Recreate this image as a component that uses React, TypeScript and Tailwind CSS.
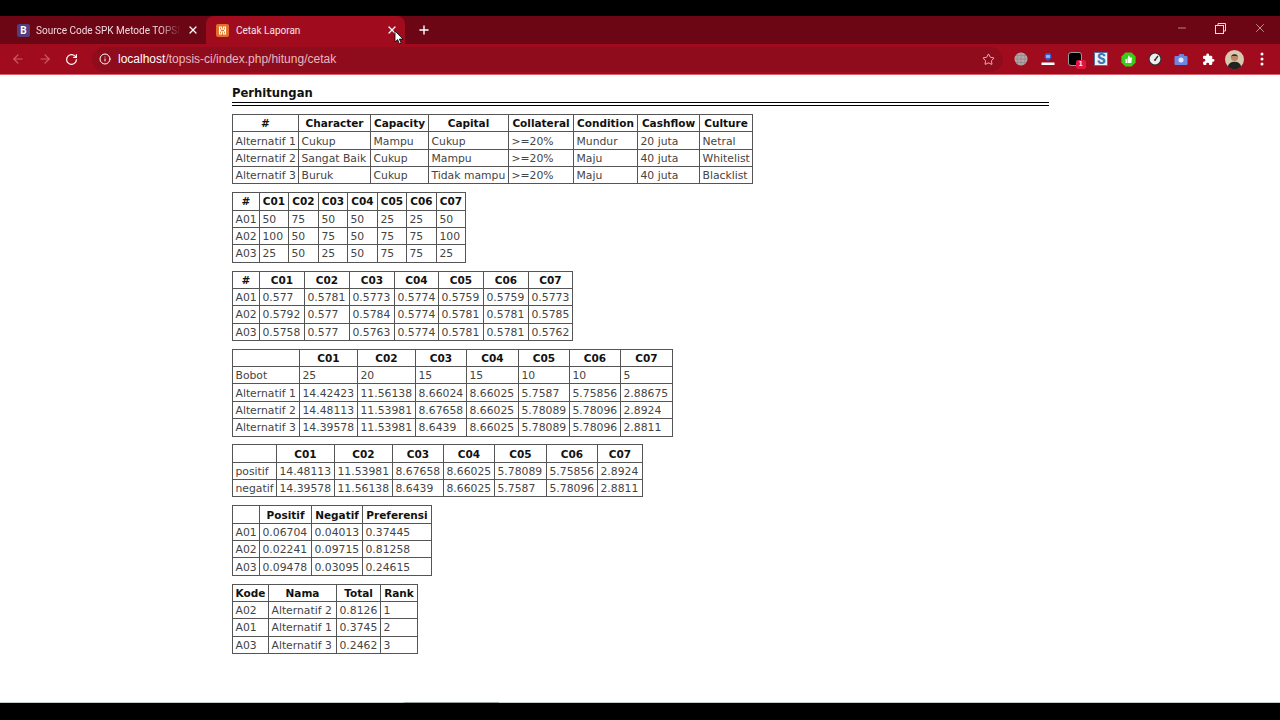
import React from "react";
import { ArrowLeft, ArrowRight, RotateCw, Info, Star, X, Plus, Minus } from "lucide-react";

type T = { cols: number[]; head: string[]; rows: string[][] };
const tables: T[] = [
  { cols: [66, 72, 58, 80, 65, 64, 62, 53], head: ["#", "Character", "Capacity", "Capital", "Collateral", "Condition", "Cashflow", "Culture"], rows: [
    ["Alternatif 1", "Cukup", "Mampu", "Cukup", ">=20%", "Mundur", "20 juta", "Netral"],
    ["Alternatif 2", "Sangat Baik", "Cukup", "Mampu", ">=20%", "Maju", "40 juta", "Whitelist"],
    ["Alternatif 3", "Buruk", "Cukup", "Tidak mampu", ">=20%", "Maju", "40 juta", "Blacklist"],
  ]},
  { cols: [27, 29, 30, 29, 30, 29, 30, 29], head: ["#", "C01", "C02", "C03", "C04", "C05", "C06", "C07"], rows: [
    ["A01", "50", "75", "50", "50", "25", "25", "50"],
    ["A02", "100", "50", "75", "50", "75", "75", "100"],
    ["A03", "25", "50", "25", "50", "75", "75", "25"],
  ]},
  { cols: [27, 45, 45, 45, 44, 45, 45, 44], head: ["#", "C01", "C02", "C03", "C04", "C05", "C06", "C07"], rows: [
    ["A01", "0.577", "0.5781", "0.5773", "0.5774", "0.5759", "0.5759", "0.5773"],
    ["A02", "0.5792", "0.577", "0.5784", "0.5774", "0.5781", "0.5781", "0.5785"],
    ["A03", "0.5758", "0.577", "0.5763", "0.5774", "0.5781", "0.5781", "0.5762"],
  ]},
  { cols: [67, 58, 58, 51, 52, 51, 51, 52], head: ["", "C01", "C02", "C03", "C04", "C05", "C06", "C07"], rows: [
    ["Bobot", "25", "20", "15", "15", "10", "10", "5"],
    ["Alternatif 1", "14.42423", "11.56138", "8.66024", "8.66025", "5.7587", "5.75856", "2.88675"],
    ["Alternatif 2", "14.48113", "11.53981", "8.67658", "8.66025", "5.78089", "5.78096", "2.8924"],
    ["Alternatif 3", "14.39578", "11.53981", "8.6439", "8.66025", "5.78089", "5.78096", "2.8811"],
  ]},
  { cols: [44, 58, 58, 51, 51, 52, 51, 45], head: ["", "C01", "C02", "C03", "C04", "C05", "C06", "C07"], rows: [
    ["positif", "14.48113", "11.53981", "8.67658", "8.66025", "5.78089", "5.75856", "2.8924"],
    ["negatif", "14.39578", "11.56138", "8.6439", "8.66025", "5.7587", "5.78096", "2.8811"],
  ]},
  { cols: [27, 52, 51, 69], head: ["", "Positif", "Negatif", "Preferensi"], rows: [
    ["A01", "0.06704", "0.04013", "0.37445"],
    ["A02", "0.02241", "0.09715", "0.81258"],
    ["A03", "0.09478", "0.03095", "0.24615"],
  ]},
  { cols: [36, 68, 44, 37], head: ["Kode", "Nama", "Total", "Rank"], rows: [
    ["A02", "Alternatif 2", "0.8126", "1"],
    ["A01", "Alternatif 1", "0.3745", "2"],
    ["A03", "Alternatif 3", "0.2462", "3"],
  ]},
];

function DataTable({ t }: { t: T }) {
  const total = t.cols.reduce((a, b) => a + b, 0);
  return (
    <table className="table-fixed border-collapse border border-[#555] mb-[7.9px] text-[10.8px] leading-[15px] text-[#444]" style={{ width: total + 1 }}>
      <colgroup>
        {t.cols.map((w, i) => <col key={i} style={{ width: w }} />)}
      </colgroup>
      <thead>
        <tr>
          {t.head.map((h, i) => (
            <th key={i} className="border border-[#555] px-[2.5px] pt-[1px] h-[17.35px] text-[10.5px] font-bold text-center text-[#111] whitespace-nowrap">{h}</th>
          ))}
        </tr>
      </thead>
      <tbody>
        {t.rows.map((r, i) => (
          <tr key={i}>
            {r.map((c, j) => (
              <td key={j} className="border border-[#555] px-[2.5px] pt-[1px] h-[17.35px] whitespace-nowrap">{c}</td>
            ))}
          </tr>
        ))}
      </tbody>
    </table>
  );
}

function Slot({ children }: { children: React.ReactNode }) {
  return <div className="w-[26.7px] h-[20px] flex items-center justify-center shrink-0">{children}</div>;
}

function XamppIcon() {
  return (
    <svg className="shrink-0" width="13" height="13" viewBox="0 0 13 13">
      <rect width="13" height="13" rx="2" fill="#e2702c" />
      <path d="M3.500 3h2v2.200h2V3h2v3h-1v1h1v3h-2V7.800h-2V10h-2V7h1V6h-1z" fill="none" stroke="#fff" strokeWidth="1.100" />
    </svg>
  );
}

export default function App() {
  return (
    <div className="relative w-[1280px] h-[720px] overflow-hidden bg-black flex flex-col pt-[16px] font-['Roboto',sans-serif]">
      <div className="h-[28px] bg-[#6c0615] flex items-end relative">
        <div className="flex items-center w-[206px] h-[28px] pl-[17px] pr-[7px]">
          <span className="w-[13px] h-[13px] rounded-[2px] bg-[#563d7c] text-white text-[10px] font-bold flex items-center justify-center shrink-0">B</span>
          <span className="ml-[6px] w-[145px] overflow-hidden whitespace-nowrap text-[10px] text-[#f0d8dc] [mask-image:linear-gradient(to_right,black_85%,transparent)]">Source Code SPK Metode TOPSIS</span>
          <X size={12} strokeWidth={2.4} className="text-white ml-auto" />
        </div>
        <div className="flex items-center w-[199px] h-[28px] rounded-t-[8px] bg-[#a00c1e] pl-[10px] pr-[7px]">
          <XamppIcon />
          <span className="ml-[7px] whitespace-nowrap text-[10px] text-[#f6e4e6]">Cetak Laporan</span>
          <X size={12} strokeWidth={2.4} className="text-white ml-auto" />
        </div>
        <Plus size={14} strokeWidth={2.4} className="text-white ml-[12px] mb-[7px]" />
        <div className="ml-auto flex items-center mb-[9px] text-[#f0d8dc]">
          <Minus size={12} strokeWidth={1.200} />
          <svg className="ml-[27px]" width="11" height="11" viewBox="0 0 11 11" fill="none" stroke="currentColor"><rect x="0.500" y="2.500" width="8" height="8" /><path d="M3 2.500V.500h7.500V8H8.500" /></svg>
          <X size={14} strokeWidth={1.100} className="ml-[27px] mr-[13px]" />
        </div>
        <svg className="absolute left-[393.500px] top-[14px]" width="10" height="15" viewBox="0 0 10 15"><path d="M1 1v11l2.600-2.400L5.400 14l1.800-.8-1.800-4.100H9z" fill="#fff" stroke="#000" strokeWidth="0.800" /></svg>
      </div>
      <div className="h-[31px] bg-[#a00c1e] flex items-center border-b border-[#d9606c]">
        <ArrowLeft size={14} className="ml-[11px] text-[#d05c6a]" />
        <ArrowRight size={14} className="ml-[13px] text-[#d05c6a]" />
        <RotateCw size={13} strokeWidth={2.200} className="ml-[13px] text-white" />
        <div className="ml-[14px] w-[911px] h-[25px] rounded-full bg-[#8f0c1d] flex items-center pl-[7px]">
          <Info size={12} strokeWidth={2} className="text-white" />
          <span className="ml-[7px] text-[12px] font-['Liberation_Sans',sans-serif] text-[#e9b8bf]"><span className="text-white">localhost</span>/topsis-ci/index.php/hitung/cetak</span>
          <Star size={13} strokeWidth={1.600} className="ml-auto mr-[8px] text-[#f0d0d4]" />
        </div>
        <div className="flex items-center ml-[5px]">
          <Slot>
            <svg width="14" height="14" viewBox="0 0 14 14" fill="none"><circle cx="7" cy="7" r="6.500" fill="#b3a6a8" /><path d="M.5 7h13M7 .5v13M2 3.500h10M2 10.500h10M4 1.500q-2 5.500 0 11M10 1.500q2 5.500 0 11" stroke="#8f8082" strokeWidth="0.600" /></svg>
          </Slot>
          <Slot>
            <svg width="14" height="14" viewBox="0 0 14 14"><path d="M3.500 4.500a3.500 3.500 0 0 1 7 0c0 2-2 3-3.500 4.500C5.500 7.500 3.500 6.500 3.500 4.500z" fill="#2f5fd0" /><rect x="0.500" y="10.500" width="13" height="2.500" fill="#fff" /><path d="M6 3v3M8 3v3" stroke="#fff" /></svg>
          </Slot>
          <Slot>
            <span className="relative w-[14px] h-[14px] rounded-[3px] bg-black border border-[#999] block">
              <span className="absolute left-[7px] top-[7px] w-[10px] h-[9px] rounded-[2px] bg-[#e0173c] text-white text-[7px] font-bold flex items-center justify-center font-['Liberation_Sans',sans-serif]">1</span>
            </span>
          </Slot>
          <Slot>
            <span className="w-[14px] h-[14px] bg-[#f2f2f6] border border-[#5a6fa0] text-[#3f78b5] text-[14px] leading-none font-black flex items-center justify-center">S</span>
          </Slot>
          <Slot>
            <svg width="15" height="15" viewBox="0 0 15 15"><path d="M4.400.500h6.200l4 4v6l-4 4H4.400l-4-4v-6z" fill="#3ccb16" /><path d="M4.500 7h1.500v4H4.500zM6.500 7l1-3.500c1 0 1.300.8 1.100 2H11l-.6 5.500H6.500z" fill="#fff" /></svg>
          </Slot>
          <Slot>
            <svg width="14" height="14" viewBox="0 0 14 14" fill="none"><circle cx="7" cy="7" r="6" fill="#eee" stroke="#333" strokeWidth="1.200" /><path d="M7 8l3-4" stroke="#333" strokeWidth="1.400" /><circle cx="7" cy="8" r="1" fill="#333" /></svg>
          </Slot>
          <Slot>
            <svg width="14" height="13" viewBox="0 0 14 13"><path d="M1.500 3h3l1-2h4l1 2h2a1 1 0 0 1 1 1v7a1 1 0 0 1-1 1H1.500a1 1 0 0 1-1-1V4a1 1 0 0 1 1-1z" fill="#6f86e0" /><circle cx="7" cy="7" r="2.500" fill="#dfe6ff" /></svg>
          </Slot>
          <Slot>
            <svg width="13" height="13" viewBox="0 0 24 24" fill="#fff"><path d="M20.500 11H19V7a2 2 0 0 0-2-2h-4V3.500a2.500 2.500 0 0 0-5 0V5H4a2 2 0 0 0-2 2v3.800h1.500a2.700 2.700 0 0 1 0 5.400H2V20a2 2 0 0 0 2 2h3.800v-1.500a2.700 2.700 0 0 1 5.400 0V22H17a2 2 0 0 0 2-2v-4h1.500a2.500 2.500 0 0 0 0-5z" /></svg>
          </Slot>
          <Slot>
            <svg width="19" height="19" viewBox="0 0 19 19"><circle cx="9.500" cy="9.500" r="9.500" fill="#d8c8b0" /><circle cx="9.500" cy="7.500" r="3.600" fill="#b98a68" /><path d="M5.800 6.500Q9.500 1.800 13.200 6.500 9.500 4.800 5.800 6.500z" fill="#222" /><path d="M2.800 16.500Q4 11.800 9.500 11.800t6.700 4.700A9.500 9.500 0 0 1 2.800 16.500z" fill="#222" /></svg>
          </Slot>
          <Slot>
            <svg width="4" height="14" viewBox="0 0 4 14" fill="#fff"><circle cx="2" cy="2" r="1.500" /><circle cx="2" cy="7" r="1.500" /><circle cx="2" cy="12" r="1.500" /></svg>
          </Slot>
        </div>
      </div>
      <div className="h-[628px] bg-white pl-[232px] pt-[9px] border-b border-[#c4cccc] font-['DejaVu_Sans',sans-serif]">
        <h2 className="text-[11.6px] font-bold leading-[18px] text-[#111]">Perhitungan</h2>
        <div className="w-[817px] h-[4px] border-y-[1.500px] border-black mb-[8px]" />
        {tables.map((t, i) => <DataTable key={i} t={t} />)}
      </div>
      <div className="absolute left-[404px] top-[702px] w-[95px] h-[1px] bg-[#9aa0a0]" />
      <div className="h-[17px] bg-black" />
    </div>
  );
}
